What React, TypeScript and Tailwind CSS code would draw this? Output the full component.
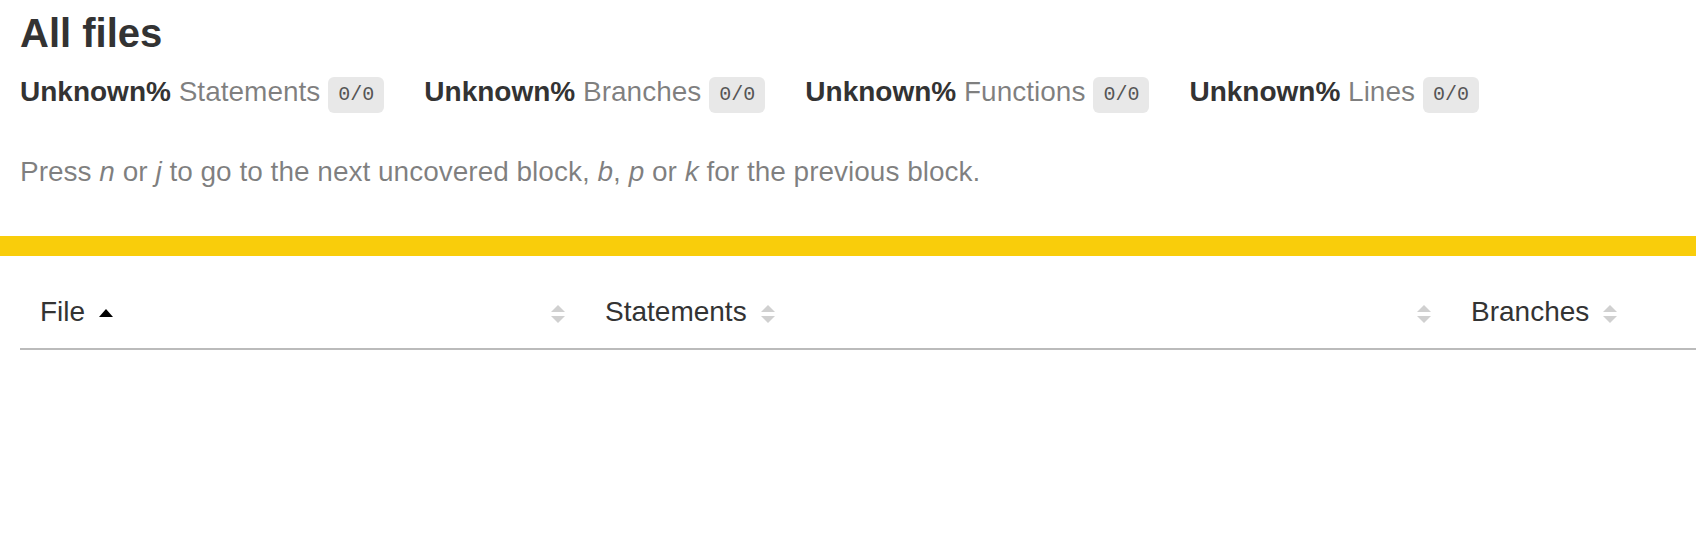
import React from 'react';

// Coverage summary page (istanbul-style "All files" report), drawn at 2x scale

type Stat = { label: string; fraction: string };

const stats: Stat[] = [
  { label: 'Statements', fraction: '0/0' },
  { label: 'Branches', fraction: '0/0' },
  { label: 'Functions', fraction: '0/0' },
  { label: 'Lines', fraction: '0/0' },
];

type Column = { label: string; width: string; align: 'left' | 'right'; sorted?: boolean };

// Only the columns that fit the window; the header rule runs past the right edge
const columns: Column[] = [
  { label: 'File', width: 'w-[280px]', align: 'left', sorted: true },
  { label: '', width: 'w-[285px]', align: 'right' },
  { label: 'Statements', width: 'w-[560px]', align: 'left' },
  { label: '', width: 'w-[306px]', align: 'right' },
  { label: 'Branches', width: 'w-[400px]', align: 'left' },
];

function Sorter({ sorted }: { sorted?: boolean }) {
  if (sorted) {
    return (
      <svg width="14" height="20" viewBox="0 0 14 20" className="inline ml-[14px]">
        <polygon points="7,5 14,13 0,13" fill="#000" />
      </svg>
    );
  }
  return (
    <svg width="14" height="20" viewBox="0 0 14 20" className="inline ml-[14px]">
      <polygon points="7,1 14,8 0,8" fill="#d0d0d0" />
      <polygon points="0,12 14,12 7,19" fill="#d0d0d0" />
    </svg>
  );
}

export default function App() {
  return (
    <div className="w-full min-h-screen overflow-hidden bg-white text-[#333] text-[28px] font-['Liberation_Sans',Arial,sans-serif]">
      {/* Header block */}
      <div className="px-5 pt-[10px] pb-5">
        <h1 className="m-0 text-[40px] leading-[46px] font-bold">All files</h1>

        <div className="flex flex-wrap">
          {stats.map((s) => (
            <div key={s.label} className="flex items-center h-[72px] py-5 pr-10 leading-8">
              <span className="whitespace-nowrap">
                <span className="font-bold">Unknown%</span>{' '}
                <span className="text-black/50">{s.label}</span>
              </span>
              <span className="ml-2 mt-[6px] rounded-[6px] bg-[#e8e8e8] px-[10px] py-2 text-[20px] leading-5 text-[#555] font-['Liberation_Mono',monospace]">
                {s.fraction}
              </span>
            </div>
          ))}
        </div>

        <p className="my-7 leading-8 text-black/50">
          Press <i>n</i> or <i>j</i> to go to the next uncovered block, <i>b</i>, <i>p</i> or{' '}
          <i>k</i> for the previous block.
        </p>
      </div>

      {/* Status line */}
      <div className="h-5 bg-[#f9cd0b]" />

      {/* Summary table header */}
      <div className="p-5">
        <div className="flex w-max border-b-2 border-[#bbb]">
          {columns.map((c, i) => (
            <div
              key={i}
              className={`${c.width} shrink-0 p-5 leading-8 whitespace-nowrap ${
                c.align === 'right' ? 'text-right' : 'text-left'
              }`}
            >
              {c.label}
              <Sorter sorted={c.sorted} />
            </div>
          ))}
        </div>
      </div>
    </div>
  );
}
